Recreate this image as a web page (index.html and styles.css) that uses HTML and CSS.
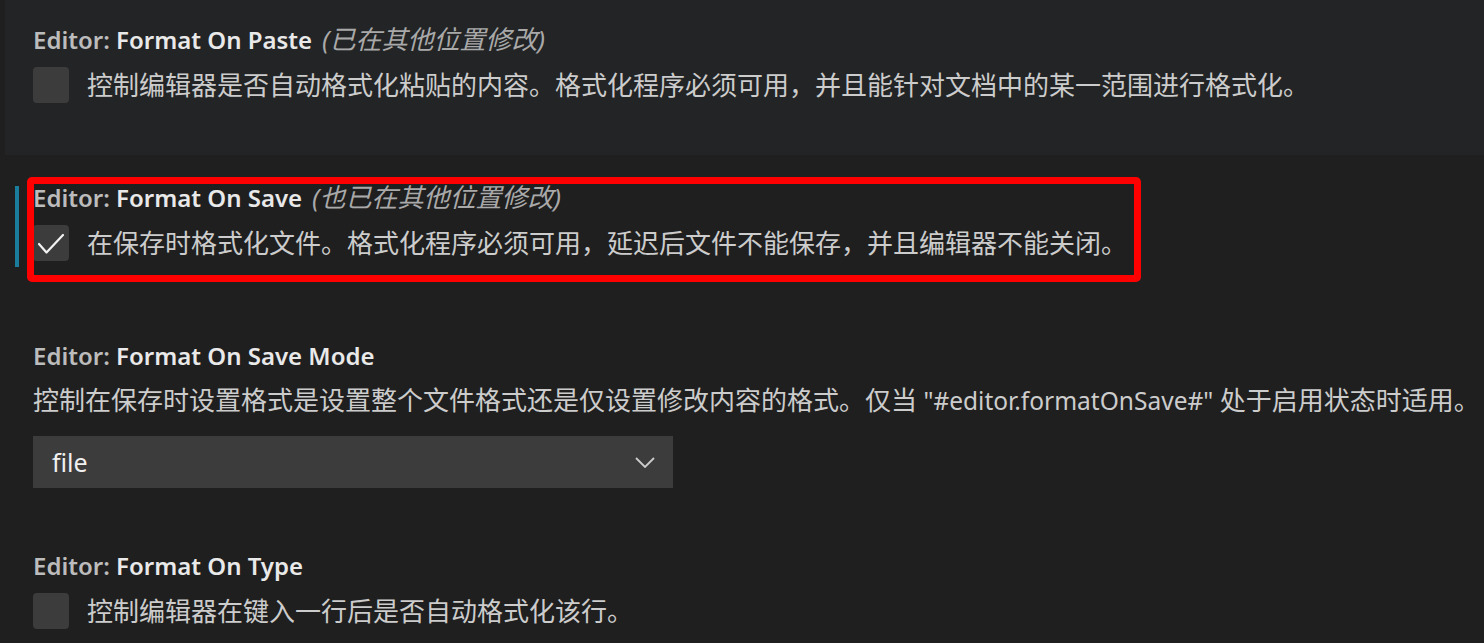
FILE: index.html
```html
<!DOCTYPE html>
<html lang="zh-CN">
<head>
    <meta charset="UTF-8">
    <meta name="viewport" content="width=device-width, initial-scale=1.0">
    <title>Settings - Format</title>
    <link rel="stylesheet" href="styles.css">
</head>
<body>
    <div class="settings">

        <div class="setting setting-first">
            <div class="title">
                <span class="category">Editor: </span><span class="label">Format On Paste</span>
                <span class="modified">(已在其他位置修改)</span>
            </div>
            <div class="check-row">
                <span class="checkbox"></span>
                <span class="desc">控制编辑器是否自动格式化粘贴的内容。格式化程序必须可用，并且能针对文档中的某一范围进行格式化。</span>
            </div>
        </div>

        <div class="setting setting-focused">
            <div class="title">
                <span class="category">Editor: </span><span class="label">Format On Save</span>
                <span class="modified">(也已在其他位置修改)</span>
            </div>
            <div class="check-row">
                <span class="checkbox">
                    <svg width="36" height="36" viewBox="0 0 36 36">
                        <path d="M6 19 L13.5 27.5 L30 10" fill="none" stroke="#f2f2f2" stroke-width="2.2" stroke-linecap="round" stroke-linejoin="round"/>
                    </svg>
                </span>
                <span class="desc">在保存时格式化文件。格式化程序必须可用，延迟后文件不能保存，并且编辑器不能关闭。</span>
            </div>
            <div class="highlight"></div>
        </div>

        <div class="setting setting-select">
            <div class="title">
                <span class="category">Editor: </span><span class="label">Format On Save Mode</span>
            </div>
            <div class="desc desc-line">控制在保存时设置格式是设置整个文件格式还是仅设置修改内容的格式。仅当<span class="latin"> "#editor.formatOnSave#" </span>处于启用状态时适用。</div>
            <div class="select">
                <span>file</span>
                <svg width="20" height="11" viewBox="0 0 20 11">
                    <path d="M1 1 L10 10 L19 1" fill="none" stroke="#cccccc" stroke-width="1.8"/>
                </svg>
            </div>
        </div>

        <div class="setting setting-last">
            <div class="title">
                <span class="category">Editor: </span><span class="label">Format On Type</span>
            </div>
            <div class="check-row">
                <span class="checkbox"></span>
                <span class="desc">控制编辑器在键入一行后是否自动格式化该行。</span>
            </div>
        </div>

    </div>
</body>
</html>
```

FILE: styles.css
```css
body {
    margin: 0;
    background-color: #1f1f1f;
    font-family: "Noto Sans", "Noto Sans CJK SC", sans-serif;
    font-size: 26px;
    color: #cccccc;
    overflow: hidden;
}

.settings {
    width: 1484px;
}

.setting {
    position: relative;
    box-sizing: border-box;
    height: 158px;
    padding: 24px 0 0 33px;
}

.setting-first {
    height: 155px;
    padding-top: 21px;
    padding-left: 28px;
    margin-left: 5px;
    background-color: #232425;
}

.setting-select {
    height: 210px;
}

.setting-last {
    height: auto;
}

.title {
    height: 36px;
    line-height: 36px;
    white-space: nowrap;
}

.category {
    color: #bcbcbc;
    font-weight: 600;
    font-size: 24px;
}

.label {
    color: #e9e9e9;
    font-weight: 600;
    font-size: 24px;
}

.modified {
    color: #a9a9a9;
    font-style: italic;
    margin-left: 3px;
}

.check-row {
    display: flex;
    align-items: center;
    gap: 18px;
    margin-top: 10px;
    height: 36px;
}

.checkbox {
    width: 36px;
    height: 36px;
    flex: none;
    border-radius: 4px;
    background-color: #3c3c3c;
}

.checkbox svg {
    display: block;
}

.desc {
    color: #cccccc;
    line-height: 36px;
    white-space: nowrap;
}

.desc-line {
    margin-top: 9px;
}

.latin {
    font-size: 24.5px;
}

.select {
    display: flex;
    align-items: center;
    justify-content: space-between;
    box-sizing: border-box;
    width: 640px;
    height: 52px;
    margin-top: 17px;
    padding: 0 18px 0 19px;
    background-color: #3c3c3c;
    color: #f0f0f0;
    font-size: 25px;
}

/* focus bar on the left of the active row */
.setting-focused::before {
    content: "";
    position: absolute;
    left: 15px;
    top: 31px;
    width: 4px;
    height: 81px;
    background-color: #1a7d9b;
}

/* red annotation box */
.highlight {
    position: absolute;
    left: 27px;
    top: 22px;
    width: 1114px;
    height: 105px;
    box-sizing: border-box;
    border: 7px solid #ff0000;
    border-radius: 5px;
}
```
